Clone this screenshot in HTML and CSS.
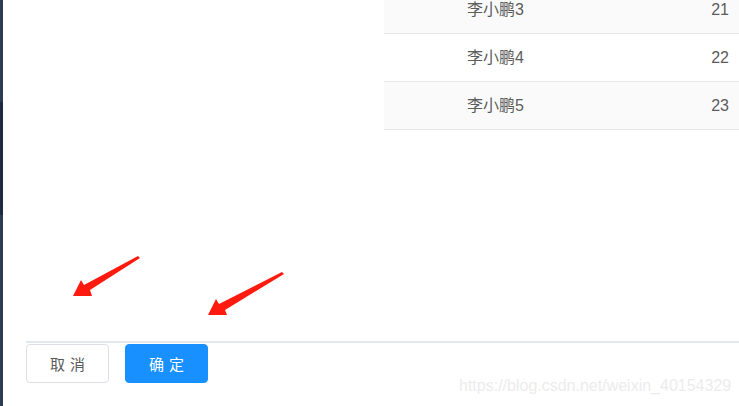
FILE: index.html
```html
<!DOCTYPE html>
<html lang="zh-CN">
<head>
<meta charset="utf-8">
<title>Dialog</title>
<link rel="stylesheet" href="styles.css">
</head>
<body>
<div class="app">
  <aside class="rail">
    <div class="rail-top"></div>
    <div class="rail-mid"></div>
    <div class="rail-bottom"></div>
  </aside>
  <main class="panel">
    <section class="content">
      <div class="table">
        <div class="row striped"><div class="cell name">李小鹏3</div><div class="cell age">21</div></div>
        <div class="row"><div class="cell name">李小鹏4</div><div class="cell age">22</div></div>
        <div class="row striped"><div class="cell name">李小鹏5</div><div class="cell age">23</div></div>
      </div>
    </section>
    <footer class="footer">
      <button class="btn btn-default">取消</button>
      <button class="btn btn-primary">确定</button>
    </footer>
  </main>
</div>
<svg class="arrows" width="739" height="406" viewBox="0 0 739 406" xmlns="http://www.w3.org/2000/svg">
  <polygon points="138,256 140,258 90,290 92,296 73,296 81,280 84,285" fill="#ff1a0f"/>
  <polygon points="282,272 284,274 225,310 227,315 208,315 216,299 219,304" fill="#ff1a0f"/>
</svg>
<div class="watermark">https://blog.csdn.net/weixin_40154329</div>
</body>
</html>
```
FILE: styles.css
```css
html, body {
  margin: 0;
  padding: 0;
  background: #ffffff;
}
body {
  width: 739px;
  height: 406px;
  overflow: hidden;
  position: relative;
  font-family: "Liberation Sans", "Noto Sans CJK SC", sans-serif;
}
.app {
  display: flex;
  height: 406px;
}
.rail {
  width: 3px;
  flex: none;
  display: flex;
  flex-direction: column;
}
.rail-top {
  height: 102px;
  background: #2d3b53;
}
.rail-mid {
  height: 113px;
  background: #1d2a3f;
}
.rail-bottom {
  flex: 1;
  background: #2d3b53;
}
.panel {
  flex: 1;
  display: flex;
  flex-direction: column;
}
.content {
  height: 341px;
  overflow: hidden;
}
.table {
  margin-left: 381px;
  margin-top: -14px;
}
.row {
  display: flex;
  align-items: center;
  height: 47px;
  border-bottom: 1px solid #e8e8e8;
  font-size: 16px;
  line-height: 20px;
  color: #5c5c5c;
}
.row.striped {
  background: #fafafa;
}
.cell {
  height: 20px;
}
.cell.name {
  padding-left: 83px;
  flex: 1;
}
.cell.age {
  padding-right: 10px;
  text-align: right;
  padding-top: 1px;
}
.footer {
  margin-left: 23px;
  border-top: 2px solid #e4e7f0;
  padding-top: 1px;
  display: flex;
  gap: 16px;
}
.btn {
  width: 83px;
  height: 39px;
  border-radius: 4px;
  font-family: "Noto Sans CJK SC", sans-serif;
  font-size: 15px;
  letter-spacing: 5px;
  text-indent: 5px;
  padding: 0;
  cursor: pointer;
}
.btn-default {
  background: #ffffff;
  border: 1px solid #dcdfe6;
  color: #5a5a5a;
}
.btn-primary {
  background: #1890ff;
  border: 1px solid #1890ff;
  color: #ffffff;
}
.arrows {
  position: absolute;
  left: 0;
  top: 0;
  pointer-events: none;
}
.watermark {
  position: absolute;
  left: 459px;
  top: 377px;
  font-size: 16px;
  color: #ececec;
  white-space: nowrap;
}
```
